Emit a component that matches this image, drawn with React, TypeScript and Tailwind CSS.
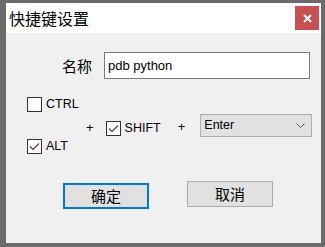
import React from 'react';

const cjk = '"Noto Sans CJK SC", "Noto Sans", sans-serif';
const latin = '"Liberation Sans", Arial, sans-serif';

const Check = ({ checked }: { checked: boolean }) => (
  <span className="flex h-[15px] w-[15px] shrink-0 items-center justify-center border border-[#333333] bg-white">
    {checked && (
      <svg width="11" height="9" viewBox="0 0 11 9">
        <polyline points="1,4.5 4,7.5 10,1.5" fill="none" stroke="#404040" strokeWidth="1.1" />
      </svg>
    )}
  </span>
);

const CheckItem = ({ label, checked }: { label: string; checked: boolean }) => (
  <label className="flex h-[15px] items-center gap-[4px] text-[12.5px] leading-none text-black" style={{ fontFamily: latin }}>
    <Check checked={checked} />
    <span>{label}</span>
  </label>
);

export default function App() {
  return (
    <div className="h-[247px] w-[325px] bg-[#6b6b6b] pb-[4px] pl-[6px] pr-[4px] pt-[3px]">
      <div className="flex h-full w-full flex-col bg-[#f0f0f0]">
        {/* title bar */}
        <div className="flex h-[30px] items-center justify-between bg-white pl-[3px] pr-[2px]">
          <span className="text-[16px] leading-none text-black" style={{ fontFamily: cjk }}>
            快捷键设置
          </span>
          <button className="flex h-[24px] w-[24px] items-center justify-center bg-[#c75050]">
            <svg width="9" height="9" viewBox="0 0 9 9">
              <path d="M1 1 L8 8 M8 1 L1 8" stroke="white" strokeWidth="2" />
            </svg>
          </button>
        </div>

        {/* name row */}
        <div className="mt-[19px] flex items-center pl-[56px]">
          <span className="w-[30px] text-[15px] leading-none text-black" style={{ fontFamily: cjk }}>
            名称
          </span>
          <div
            className="ml-[12px] flex h-[27px] w-[206px] items-center border border-[#7a7a7a] bg-white pl-[3px] text-[13px] text-black"
            style={{ fontFamily: latin }}
          >
            pdb python
          </div>
        </div>

        {/* keys */}
        <div className="mt-[18px] flex items-center pl-[21px]">
          <div className="flex w-[59px] flex-col gap-[27px]">
            <CheckItem label="CTRL" checked={false} />
            <CheckItem label="ALT" checked={true} />
          </div>
          <span className="mt-[3px] text-[13px] leading-none text-black" style={{ fontFamily: latin }}>+</span>
          <div className="ml-[12px] mt-[5px]">
            <CheckItem label="SHIFT" checked={true} />
          </div>
          <span className="ml-[17px] mt-[2px] text-[13px] leading-none text-black" style={{ fontFamily: latin }}>+</span>
          <div
            className="ml-[15px] flex h-[23px] w-[112px] items-center justify-between border border-[#adadad] bg-[#e1e1e1] pl-[3px] pr-[6px] text-[12.5px] text-black"
            style={{ fontFamily: latin }}
          >
            <span>Enter</span>
            <svg width="9" height="5" viewBox="0 0 9 5">
              <polyline points="0.5,0.5 4.5,4.5 8.5,0.5" fill="none" stroke="#606060" strokeWidth="1" />
            </svg>
          </div>
        </div>

        {/* buttons */}
        <div className="mt-[27px] flex items-start pl-[57px]">
          <button
            className="mt-[2px] flex h-[26px] w-[86px] items-center justify-center border-2 border-[#0078d7] bg-[#e1e1e1] text-[15px] text-black"
            style={{ fontFamily: cjk }}
          >
            确定
          </button>
          <button
            className="ml-[38px] flex h-[26px] w-[86px] items-center justify-center border border-[#adadad] bg-[#e1e1e1] text-[15px] text-black"
            style={{ fontFamily: cjk }}
          >
            取消
          </button>
        </div>
      </div>
    </div>
  );
}
